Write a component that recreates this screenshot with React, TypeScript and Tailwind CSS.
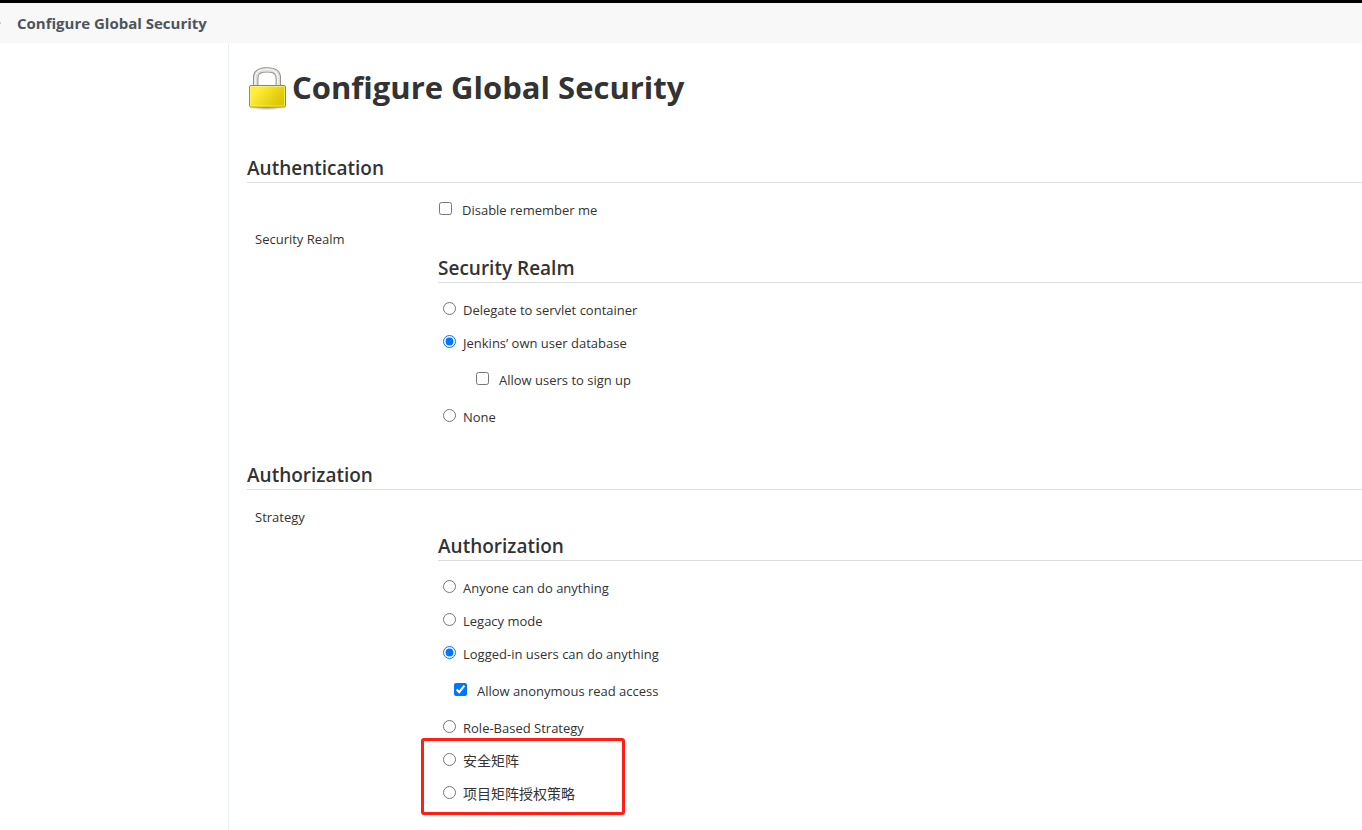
import type { ReactNode } from 'react';

interface OptionProps {
  name: string;
  label: string;
  defaultChecked?: boolean;
}

function RadioOption({ name, label, defaultChecked }: OptionProps) {
  return (
    <label className="flex h-[33px] items-center gap-[7px] pb-0.5 pl-[5px]">
      <input type="radio" name={name} defaultChecked={defaultChecked} className="size-[13px]" />
      <span className="pt-0.5">{label}</span>
    </label>
  );
}

function CheckboxOption({ name, label, defaultChecked }: OptionProps) {
  return (
    <label className="flex items-center gap-2.5 pb-0.5">
      <input type="checkbox" name={name} defaultChecked={defaultChecked} className="size-[13px]" />
      <span className="pt-0.5">{label}</span>
    </label>
  );
}

function SectionTitle({ children }: { children: ReactNode }) {
  return (
    <h2 className="mb-3.5 border-b border-[#dddddd] pt-7 text-[19px] leading-7 font-semibold">
      {children}
    </h2>
  );
}

function SettingRow({ label, title, children }: { label: string; title: string; children: ReactNode }) {
  return (
    <div className="flex">
      <div className="w-[191px] shrink-0 pl-2 leading-[26px]">{label}</div>
      <fieldset className="min-w-0 grow">
        <legend className="mb-2.5 w-full border-b border-[#dddddd] pt-7 text-[19px] leading-7 font-semibold">
          {title}
        </legend>
        {children}
      </fieldset>
    </div>
  );
}

function LockIcon() {
  return (
    <svg viewBox="0 0 40 44" className="h-11 w-10 shrink-0" aria-hidden="true">
      <defs>
        <linearGradient id="lock-body" x1="0" y1="0" x2="1" y2="0.5">
          <stop offset="0" stopColor="#fce94f" />
          <stop offset="0.25" stopColor="#ffee3a" />
          <stop offset="1" stopColor="#dcc600" />
        </linearGradient>
        <radialGradient id="lock-shadow">
          <stop offset="0" stopColor="#000" stopOpacity="0.4" />
          <stop offset="1" stopColor="#000" stopOpacity="0" />
        </radialGradient>
      </defs>
      <ellipse cx="20" cy="40" rx="18" ry="3.5" fill="url(#lock-shadow)" />
      <path d="M8.7 20V11C8.7 5 12.500 2.900 20 2.900s11.300 2.100 11.300 8.100v9" fill="none" stroke="#888a85" strokeWidth="5.4" />
      <path d="M8.700 20V11C8.700 5 12.500 2.900 20 2.900s11.300 2.100 11.300 8.100v9" fill="none" stroke="#dcdedb" strokeWidth="3.6" />
      <path d="M8.200 20V11C8.200 5 12.500 2.500 20 2.500s10.800 2.500 10.800 8.500v9" fill="none" stroke="#f6f6f5" strokeWidth="1.2" />
      <rect x="2.500" y="18.500" width="36" height="21.500" rx="1.500" fill="url(#lock-body)" stroke="#a58c00" />
      <rect x="3.500" y="19.500" width="34" height="19.500" rx="0.500" fill="none" stroke="#fff68a" strokeOpacity="0.7" />
    </svg>
  );
}

export default function App() {
  return (
    <div className="flex min-h-screen flex-col bg-white font-['Open_Sans','Noto_Sans_CJK_SC',sans-serif] text-[13px] leading-5 text-[#333333]">
      <header className="border-t-3 border-black bg-[#f8f8f8]">
        <nav className="flex h-10 items-center gap-4" aria-label="Breadcrumb">
          <span className="h-0.5 w-px bg-[#cccccc]" />
          <a href="#" className="text-[15px] font-bold text-[#4d545d]">
            Configure Global Security
          </a>
        </nav>
      </header>

      <div className="flex grow">
        <aside className="w-[229px] shrink-0 border-r border-[#eaeff2]" />

        <main className="min-w-0 grow pb-4 pl-[18px]">
          <div className="mb-[15px] flex items-center gap-[5px] pt-6">
            <LockIcon />
            <h1 className="pb-1 text-[31px] leading-10 font-bold">Configure Global Security</h1>
          </div>

          <SectionTitle>Authentication</SectionTitle>
          <div className="mb-1 flex h-[25px] items-center pl-48">
            <CheckboxOption name="disableRememberMe" label="Disable remember me" />
          </div>
          <SettingRow label="Security Realm" title="Security Realm">
            <RadioOption name="realm" label="Delegate to servlet container" />
            <RadioOption name="realm" label="Jenkins’ own user database" defaultChecked />
            <div className="flex h-[41px] items-center pl-[38px]">
              <CheckboxOption name="allowSignup" label="Allow users to sign up" />
            </div>
            <RadioOption name="realm" label="None" />
          </SettingRow>

          <SectionTitle>Authorization</SectionTitle>
          <SettingRow label="Strategy" title="Authorization">
            <RadioOption name="strategy" label="Anyone can do anything" />
            <RadioOption name="strategy" label="Legacy mode" />
            <RadioOption name="strategy" label="Logged-in users can do anything" defaultChecked />
            <div className="flex h-[41px] items-center pl-4">
              <CheckboxOption name="allowAnonymousRead" label="Allow anonymous read access" defaultChecked />
            </div>
            <RadioOption name="strategy" label="Role-Based Strategy" />
            <div className="relative text-sm">
              <RadioOption name="strategy" label="安全矩阵" />
              <RadioOption name="strategy" label="项目矩阵授权策略" />
              <div className="pointer-events-none absolute -top-1.5 -bottom-[5px] -left-[17px] w-[204px] rounded-[3px] border-3 border-[#ff1f14]" />
            </div>
          </SettingRow>
        </main>
      </div>
    </div>
  );
}
